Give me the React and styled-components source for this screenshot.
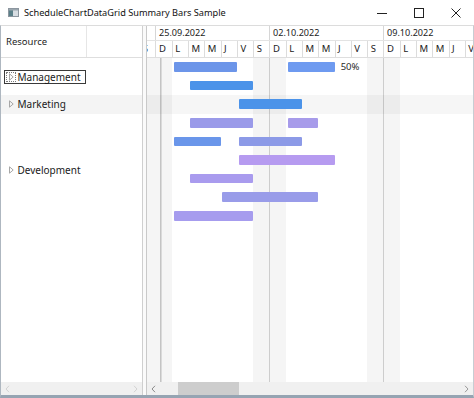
import React from "react";
import styled, { createGlobalStyle } from "styled-components";

const D = 114 / 7;
const ORIGIN = -7.8;
const LINE_H = 18.6;

const GlobalStyle = createGlobalStyle`
  html, body { margin: 0; padding: 0; background: #fff; }
  body { font-family: "Noto Sans", "Open Sans", sans-serif; color: #1a1a1a; }
  * { box-sizing: border-box; }
`;

const Window = styled.div`
  width: 474px;
  height: 398px;
  display: flex;
  flex-direction: column;
  background: #fff;
  overflow: hidden;
`;

const TitleBar = styled.div`
  height: 25px;
  flex: none;
  display: flex;
  align-items: center;
  padding-left: 8px;
`;

const TitleText = styled.span`
  margin-left: 5px;
  font-size: 9.2px;
  color: #111;
  flex: 1;
  white-space: nowrap;
`;

const WinButton = styled.div`
  width: 37px;
  height: 25px;
  display: flex;
  align-items: center;
  justify-content: center;
`;

const Content = styled.div`
  flex: 1;
  display: flex;
  min-height: 0;
  border-top: 1px solid #dcdcdc;
  border-left: 1px solid #aeb7c0;
  border-right: 1px solid #c7cdd3;
  border-bottom: 3px solid #96a4b2;
`;

const GridPane = styled.div`
  width: 142px;
  flex: none;
  display: flex;
  flex-direction: column;
  border-right: 1px solid #cfcfcf;
`;

const Splitter = styled.div`
  width: 4px;
  flex: none;
  background: #fafafa;
  border-right: 1px solid #c9c9c9;
`;

const HeaderBox = styled.div`
  height: 32px;
  flex: none;
  display: flex;
  border-bottom: 1px solid #dedede;
`;

const HeaderCell = styled.div`
  width: ${(p) => p.$w || "auto"};
  flex: ${(p) => (p.$w ? "none" : 1)};
  display: flex;
  align-items: center;
  padding-left: 5px;
  font-size: 9.5px;
  color: #1e1e1e;
  border-right: ${(p) => (p.$sep ? "1px solid #e6e6e6" : "none")};
`;

const GridBody = styled.div`
  flex: 1;
  display: flex;
  flex-direction: column;
`;

const GridRow = styled.div`
  height: ${(p) => p.$h}px;
  flex: none;
  display: flex;
  align-items: center;
  padding-left: 3px;
  background: ${(p) => (p.$band ? "#f4f4f4" : "transparent")};
`;

const NameBox = styled.div`
  display: flex;
  align-items: center;
  height: 14px;
  width: 82px;
  border: 1px solid ${(p) => (p.$focused ? "#3a3a3a" : "transparent")};
  font-size: 10px;
  color: #1a1a1a;
`;

const Expander = styled.div`
  width: 10px;
  height: 10px;
  margin-left: 1px;
  margin-right: 1.5px;
  display: flex;
  align-items: center;
  justify-content: center;
  border: 1px dotted ${(p) => (p.$focused ? "#7a7a7a" : "transparent")};
`;

const ScrollBar = styled.div`
  height: 13px;
  flex: none;
  display: flex;
  align-items: stretch;
  background: #f0f0f0;
`;

const ArrowBtn = styled.div`
  width: 13px;
  flex: none;
  display: flex;
  align-items: center;
  justify-content: center;
`;

const Track = styled.div`
  flex: 1;
  display: flex;
`;

const Thumb = styled.div`
  width: ${(p) => p.$w}px;
  margin-left: ${(p) => p.$offset}px;
  background: #cdcdcd;
`;

const ChartPane = styled.div`
  flex: 1;
  min-width: 0;
  display: flex;
  flex-direction: column;
  overflow: hidden;
`;

const Timeline = styled.div`
  margin-left: ${ORIGIN}px;
  display: flex;
  flex-direction: column;
  width: 420px;
`;

const WeekRow = styled.div`
  height: 15px;
  display: flex;
  border-bottom: 1px solid #e3e3e3;
`;

const WeekCell = styled.div`
  width: ${(p) => p.$w}px;
  flex: none;
  padding-left: 2.5px;
  font-size: 9.1px;
  line-height: 14px;
  color: #222;
  border-left: 1px solid #d6d6d6;
  white-space: nowrap;
`;

const DayRow = styled.div`
  height: 16px;
  display: flex;
`;

const DayCell = styled.div`
  width: ${D}px;
  flex: none;
  padding-left: 2.5px;
  font-size: 9.5px;
  line-height: 16px;
  color: #222;
  border-left: 1px solid #dcdcdc;
`;

const ChartBody = styled.div`
  flex: 1;
  position: relative;
  display: flex;
  flex-direction: column;
`;

const Columns = styled.div`
  position: absolute;
  top: 0;
  bottom: 0;
  left: ${ORIGIN}px;
  display: flex;
`;

const DayColumn = styled.div`
  width: ${D}px;
  flex: none;
  background: ${(p) => (p.$weekend ? "#f5f5f5" : "transparent")};
  border-left: 1px solid ${(p) => (p.$weekStart ? "#cdcdcd" : "transparent")};
`;

const StartLine = styled.div`
  position: absolute;
  top: 0;
  bottom: 0;
  left: 13px;
  width: 2px;
  border-left: 1px solid #c4c4c4;
  border-right: 1px solid #dadada;
`;

const ChartRow = styled.div`
  position: relative;
  display: flex;
  flex-direction: column;
  background: ${(p) => (p.$band ? "rgba(0,0,0,0.035)" : "transparent")};
`;

const BarLine = styled.div`
  height: ${LINE_H}px;
  position: relative;
`;

const Bar = styled.div`
  position: absolute;
  top: 4.3px;
  height: 9.6px;
  background: ${(p) => p.$color};
  border-radius: 1px;
`;

const BarLabel = styled.span`
  position: absolute;
  top: 0;
  line-height: ${LINE_H}px;
  font-size: 9.5px;
  color: #2a2a2a;
`;

const rows = [
  {
    name: "Management",
    focused: true,
    lines: [
      [
        { s: 2, e: 6, c: "#6c95e9" },
        { s: 9, e: 12, c: "#6e9af0", label: "50%" },
      ],
      [{ s: 3, e: 7, c: "#4b93e9" }],
    ],
  },
  { name: "Marketing", band: true, lines: [[{ s: 6, e: 10, c: "#4b93e9" }]] },
  {
    name: "Development",
    lines: [
      [
        { s: 3, e: 7, c: "#9a9ae9" },
        { s: 9, e: 11, c: "#a79bea" },
      ],
      [
        { s: 2, e: 5, c: "#6a96ea" },
        { s: 6, e: 10, c: "#8c9ae7" },
      ],
      [{ s: 6, e: 12, c: "#b69bf0" }],
      [{ s: 3, e: 7, c: "#a99bee" }],
      [{ s: 5, e: 11, c: "#999ce9" }],
      [{ s: 2, e: 7, c: "#a69cee" }],
    ],
  },
];

const dayLetters = ["S", "D", "L", "M", "M", "J", "V"];
const dayList = Array.from({ length: 22 }, (_, i) => dayLetters[i % 7]);
const weeks = ["25.09.2022", "02.10.2022", "09.10.2022"];

const Triangle = () => (
  <svg width="5" height="8" viewBox="0 0 5 8">
    <path d="M0.5 0.8 L4.2 4 L0.5 7.2 Z" fill="none" stroke="#a6a6a6" strokeWidth="1" />
  </svg>
);

const Chevron = ({ dir, color }) => (
  <svg width="5" height="8" viewBox="0 0 5 8">
    <path
      d={dir === "left" ? "M4 0.8 L1 4 L4 7.2" : "M1 0.8 L4 4 L1 7.2"}
      fill="none"
      stroke={color}
      strokeWidth="1"
    />
  </svg>
);

const AppIcon = () => (
  <svg width="11" height="9" viewBox="0 0 11 9">
    <rect x="0.5" y="0.5" width="10" height="8" fill="#d7dde2" stroke="#8c969f" />
    <rect x="1" y="1" width="4" height="7" fill="#5b8089" />
    <rect x="1" y="1" width="9" height="1.5" fill="#9aa6ae" />
  </svg>
);

export default function App() {
  return (
    <>
      <GlobalStyle />
      <Window>
        <TitleBar>
          <AppIcon />
          <TitleText>ScheduleChartDataGrid Summary Bars Sample</TitleText>
          <WinButton>
            <svg width="10" height="10" viewBox="0 0 10 10">
              <line x1="0" y1="5.5" x2="10" y2="5.5" stroke="#222" strokeWidth="1" />
            </svg>
          </WinButton>
          <WinButton>
            <svg width="10" height="10" viewBox="0 0 10 10">
              <rect x="0.5" y="0.5" width="9" height="9" fill="none" stroke="#222" strokeWidth="1" />
            </svg>
          </WinButton>
          <WinButton>
            <svg width="10" height="10" viewBox="0 0 10 10">
              <path d="M0.5 0.5 L9.5 9.5 M9.5 0.5 L0.5 9.5" stroke="#222" strokeWidth="1" />
            </svg>
          </WinButton>
        </TitleBar>
        <Content>
          <GridPane>
            <HeaderBox>
              <HeaderCell $w="86px" $sep>
                Resource
              </HeaderCell>
              <HeaderCell />
            </HeaderBox>
            <GridBody>
              {rows.map((r) => (
                <GridRow key={r.name} $h={r.lines.length * LINE_H} $band={r.band}>
                  <NameBox $focused={r.focused}>
                    <Expander $focused={r.focused}>
                      <Triangle />
                    </Expander>
                    {r.name}
                  </NameBox>
                </GridRow>
              ))}
            </GridBody>
            <ScrollBar>
              <ArrowBtn>
                <Chevron dir="left" color="#d2d2d2" />
              </ArrowBtn>
              <Track />
              <ArrowBtn>
                <Chevron dir="right" color="#d2d2d2" />
              </ArrowBtn>
            </ScrollBar>
          </GridPane>
          <Splitter />
          <ChartPane>
            <HeaderBox>
              <Timeline>
                <WeekRow>
                  <WeekCell $w={D} />
                  {weeks.map((w) => (
                    <WeekCell key={w} $w={7 * D}>
                      {w}
                    </WeekCell>
                  ))}
                </WeekRow>
                <DayRow>
                  {dayList.map((d, i) => (
                    <DayCell key={i}>{d}</DayCell>
                  ))}
                </DayRow>
              </Timeline>
            </HeaderBox>
            <ChartBody>
              <Columns>
                {dayList.map((_, i) => (
                  <DayColumn key={i} $weekend={i % 7 === 0 || i % 7 === 1} $weekStart={i % 7 === 1 && i > 1} />
                ))}
              </Columns>
              <StartLine />
              {rows.map((r) => (
                <ChartRow key={r.name} $band={r.band}>
                  {r.lines.map((line, li) => (
                    <BarLine key={li}>
                      {line.map((b, bi) => {
                        const left = ORIGIN + b.s * D + 1.8;
                        const right = ORIGIN + b.e * D;
                        return (
                          <React.Fragment key={bi}>
                            <Bar $color={b.c} style={{ left, width: right - left }} />
                            {b.label && <BarLabel style={{ left: right + 6 }}>{b.label}</BarLabel>}
                          </React.Fragment>
                        );
                      })}
                    </BarLine>
                  ))}
                </ChartRow>
              ))}
            </ChartBody>
            <ScrollBar>
              <ArrowBtn>
                <Chevron dir="left" color="#8a8a8a" />
              </ArrowBtn>
              <Track>
                <Thumb $offset={18} $w={61} />
              </Track>
              <ArrowBtn>
                <Chevron dir="right" color="#9a9a9a" />
              </ArrowBtn>
            </ScrollBar>
          </ChartPane>
        </Content>
      </Window>
    </>
  );
}
